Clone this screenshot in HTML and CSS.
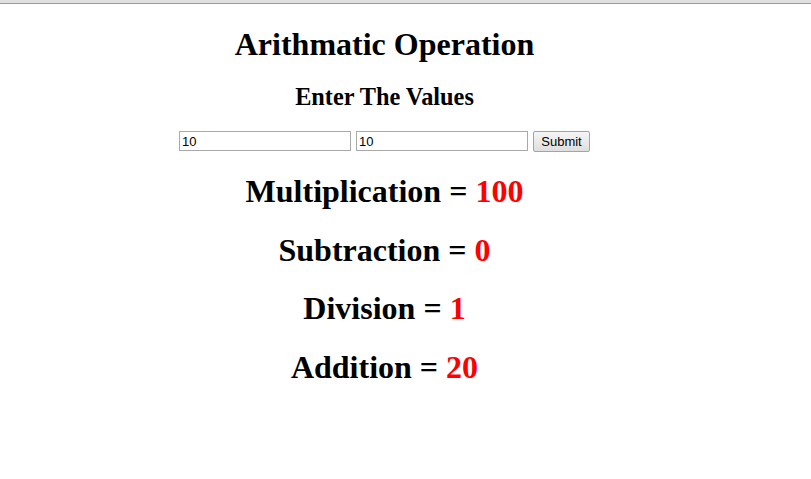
FILE: index.html
```html
<!DOCTYPE html>
<html>
<head>
<meta charset="utf-8">
<link rel="stylesheet" href="styles.css">
</head>
<body>
<div class="topbar"></div>
<div class="page">
  <h1 class="title">Arithmatic Operation</h1>
  <h2 class="subtitle">Enter The Values</h2>
  <form class="form">
    <input class="field" type="text" value="10">
    <input class="field" type="text" value="10">
    <button class="submit" type="button">Submit</button>
  </form>
  <div class="results">
    <h1 class="result">Multiplication = <span class="value">100</span></h1>
    <h1 class="result">Subtraction = <span class="value">0</span></h1>
    <h1 class="result">Division = <span class="value">1</span></h1>
    <h1 class="result">Addition = <span class="value">20</span></h1>
  </div>
</div>
</body>
</html>
```
FILE: styles.css
```css
html, body {
  margin: 0;
  padding: 0;
  background: #ffffff;
}
body {
  font-family: "Liberation Serif", "Times New Roman", serif;
  color: #000;
}
.topbar {
  height: 3px;
  background: #e1e1e1;
  border-bottom: 1px solid #9a9a9a;
}
.page {
  width: 769px;
  text-align: center;
}
.title {
  font-size: 32px;
  font-weight: bold;
  margin: 0;
  padding-top: 22px;
  line-height: 37px;
}
.subtitle {
  font-size: 24.3px;
  font-weight: bold;
  margin: 19.5px 0 0;
  line-height: 28px;
}
.form {
  margin: 20.5px 0 0;
  display: flex;
  justify-content: center;
  align-items: flex-start;
  gap: 4px;
}
.field {
  width: 172px;
  height: 20px;
  box-sizing: border-box;
  border: 1px solid #a9a9a9;
  padding: 0 2px;
  font-family: "Liberation Sans", Arial, sans-serif;
  font-size: 13px;
  color: #000;
  margin: 0 1px 0 0;
}
.submit {
  width: 57px;
  height: 21px;
  box-sizing: border-box;
  border: 1px solid #a3a3a3;
  border-radius: 2px;
  background: linear-gradient(#f6f6f6, #dedede);
  font-family: "Liberation Sans", Arial, sans-serif;
  font-size: 13px;
  color: #000;
  padding: 0;
}
.results {
  display: flex;
  flex-direction: column;
  gap: 21.6px;
  padding-top: 21px;
}
.result {
  font-size: 32px;
  font-weight: bold;
  line-height: 37px;
  margin: 0;
}
.value {
  color: #ff0000;
}
```
